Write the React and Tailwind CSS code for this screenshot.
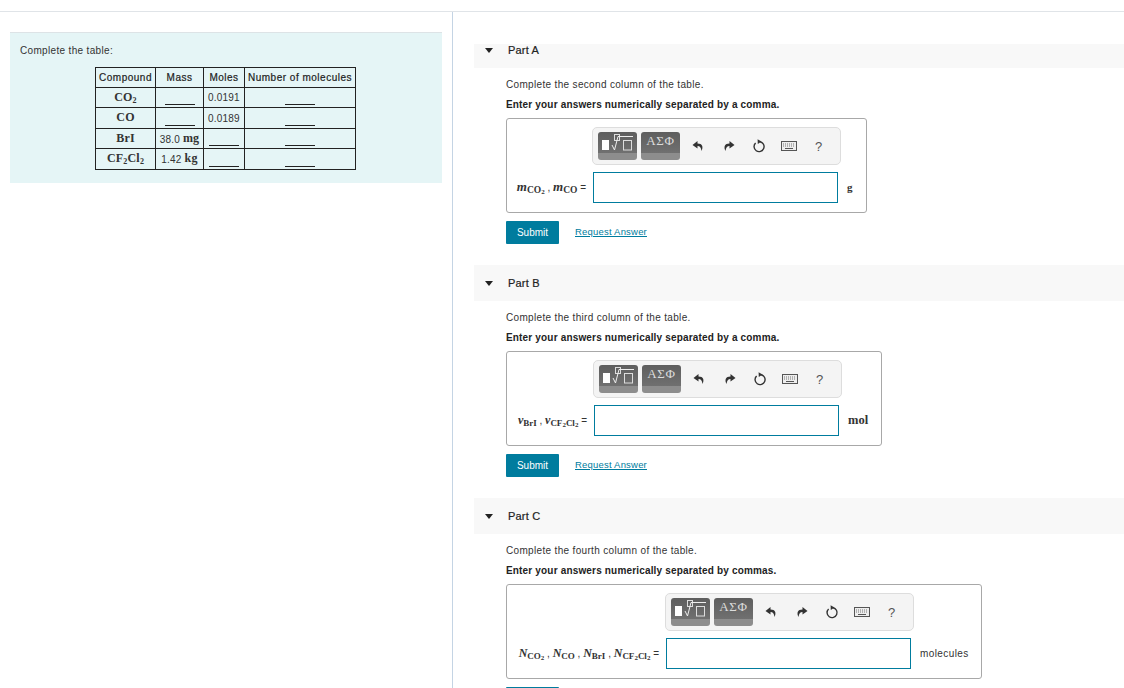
import React from "react";

const Sub = ({ children }) => <span className="relative top-[2px] text-[8px] leading-none">{children}</span>;
const M = ({ children, className = "" }) => (
  <span className={`relative -top-[1px] font-['Liberation_Serif',serif] font-bold text-[12px] text-[#333] ${className}`}>{children}</span>
);
const Blank = () => <span className="inline-block w-[30px] h-[15px] border-b border-[#222] align-top" />;

const Th = ({ children }) => <th className="border border-[#222] p-0 font-normal text-[#222] text-center whitespace-nowrap tracking-[0.5px] [-webkit-text-stroke:0.2px]">{children}</th>;
const Td = ({ children }) => <td className="border border-[#222] p-0 text-center whitespace-nowrap align-middle">{children}</td>;

function DataTable() {
  return (
    <table className="border-collapse table-fixed w-[260px] ml-[85px] mt-[10px] text-[10px] tracking-[0.2px] text-[#333]">
      <colgroup>
        <col className="w-[60px]" />
        <col className="w-[48px]" />
        <col className="w-[41px]" />
        <col className="w-[111px]" />
      </colgroup>
      <tbody>
        <tr className="h-[20px]"><Th>Compound</Th><Th>Mass</Th><Th>Moles</Th><Th>Number of molecules</Th></tr>
        <tr className="h-[20px]"><Td><M>CO<Sub>2</Sub></M></Td><Td><Blank /></Td><Td>0.0191</Td><Td><Blank /></Td></tr>
        <tr className="h-[21px]"><Td><M>CO</M></Td><Td><Blank /></Td><Td>0.0189</Td><Td><Blank /></Td></tr>
        <tr className="h-[20px]"><Td><M>BrI</M></Td><Td>38.0 <M>mg</M></Td><Td><Blank /></Td><Td><Blank /></Td></tr>
        <tr className="h-[21px]"><Td><M>CF<Sub>2</Sub>Cl<Sub>2</Sub></M></Td><Td>1.42 <M>kg</M></Td><Td><Blank /></Td><Td><Blank /></Td></tr>
      </tbody>
    </table>
  );
}

function Toolbar() {
  return (
    <div className="flex items-center w-[249px] h-[38px] bg-[#f4f4f4] border border-[#dddddd] rounded-[5px] pl-[5px]">
      <div className="w-[39px] h-[28px] rounded-[3px] overflow-hidden flex flex-col">
        <div className="h-[21px] bg-gradient-to-b from-[#5e5e5e] to-[#707070]">
          <svg width="39" height="21" viewBox="0 0 39 21" className="block">
            <rect x="4" y="8" width="7" height="10" fill="#fff" />
            <rect x="16.5" y="2.5" width="5" height="6" fill="none" stroke="#ddd" strokeWidth="1" />
            <path d="M14 13 L16.5 18 L20 4.5 H35" fill="none" stroke="#eee" strokeWidth="1" />
            <rect x="25.5" y="8.5" width="8" height="9.5" fill="none" stroke="#ddd" strokeWidth="1" />
          </svg>
        </div>
        <div className="flex-1 bg-[#8d8d8d]" />
      </div>
      <div className="w-[39px] h-[28px] ml-[4px] rounded-[3px] overflow-hidden flex flex-col">
        <div className="h-[21px] bg-gradient-to-b from-[#5e5e5e] to-[#707070] text-center text-[13px] leading-[17px] tracking-[0.6px] text-[#dcdcdc] font-['Liberation_Serif',serif]">ΑΣΦ</div>
        <div className="flex-1 bg-[#8d8d8d]" />
      </div>
      <svg width="12" height="12" viewBox="0 0 12 12" className="ml-[12px]">
        <path d="M5.5 1 L0.5 5 L5.5 8.5 V6 C8 6 9 7.5 9.5 11 C11.5 7 10.5 3.5 5.5 3.5 Z" fill="#333" />
      </svg>
      <svg width="12" height="12" viewBox="0 0 12 12" className="ml-[19px]">
        <path d="M6.5 1 L11.5 5 L6.5 8.5 V6 C4 6 3 7.5 2.5 11 C0.5 7 1.5 3.5 6.5 3.5 Z" fill="#333" />
      </svg>
      <svg width="14" height="14" viewBox="0 0 14 14" className="ml-[17px]">
        <path d="M8 2.7 A5 5 0 1 1 3.6 4" fill="none" stroke="#333" strokeWidth="1.4" />
        <path d="M5.6 0.3 L9.5 2.6 L5.8 5 Z" fill="#333" />
      </svg>
      <svg width="16" height="10" viewBox="0 0 16 10" className="ml-[15px]">
        <rect x="0.5" y="0.5" width="15" height="9" fill="#eee" stroke="#555" />
        <path d="M2 3 H14 M2 5 H14" stroke="#777" strokeWidth="1" strokeDasharray="1 1" />
        <path d="M4 7.5 H12" stroke="#555" strokeWidth="1" />
      </svg>
      <span className="ml-[18px] text-[13px] text-[#555] leading-none">?</span>
    </div>
  );
}

function Part({ title, headerClass, second, bold, boxW, labelW, label, unit }) {
  return (
    <section>
      <div className={`flex items-center bg-[#f8f8f8] pl-[11px] ${headerClass}`}>
        <span className="w-0 h-0 border-x-[4px] border-x-transparent border-t-[5px] border-t-[#222]" />
        <span className="ml-[15px] text-[11px] tracking-[0.2px] text-[#222] [-webkit-text-stroke:0.2px]">{title}</span>
      </div>
      <div className="pl-[32px]">
        <p className="mt-[10px] h-[12px] leading-[14px] text-[10px] tracking-[0.33px] text-[#333]">{second}</p>
        <p className="mt-[8px] h-[12px] leading-[14px] text-[10px] tracking-[0.17px] text-[#222] font-bold">{bold}</p>
        <div className="mt-[8px] h-[95px] border border-[#a8a8a8] rounded-[3px] flex flex-col" style={{ width: boxW }}>
          <div className="mt-[8px] flex" style={{ paddingLeft: labelW - 1 }}>
            <Toolbar />
          </div>
          <div className="mt-[7px] flex items-center">
            <div className="shrink-0 flex justify-end pr-[7px] mb-[2px] text-[10px] text-[#333] whitespace-nowrap" style={{ width: labelW }}>{label}</div>
            <div className="w-[245px] h-[31px] border border-[#007c9e] bg-white shrink-0" />
            <div className="whitespace-nowrap ml-[9px] mb-[3px]">{unit}</div>
          </div>
        </div>
        <div className="mt-[8px] flex items-center">
          <button className="w-[53px] h-[23px] bg-[#007c9e] text-white text-[10px] rounded-[1px]">Submit</button>
          <a className="ml-[16px] text-[9.5px] tracking-[0.2px] text-[#007c9e] underline">Request Answer</a>
        </div>
      </div>
    </section>
  );
}

const I = ({ children }) => <i className="font-['Liberation_Serif',serif] text-[13px] font-bold">{children}</i>;
const I2 = ({ children }) => <i className="font-['Liberation_Serif',serif] text-[12px] font-bold">{children}</i>;
const N = ({ children }) => <span className="font-['Liberation_Serif',serif] text-[9.5px] font-bold relative top-[2px]">{children}</span>;
const N2 = ({ children }) => <span className="font-['Liberation_Serif',serif] text-[9px] font-bold relative top-[2px]">{children}</span>;
const LSub = ({ children }) => <span className="relative top-[1px] text-[7px]">{children}</span>;

export default function App() {
  return (
    <div className="w-[1124px] h-[688px] overflow-hidden bg-white font-['Liberation_Sans',Arial,sans-serif] flex flex-col">
      <div className="h-[12px] shrink-0 border-b border-[#e0e4e8]" />
      <div className="flex flex-1 min-h-0">
        <div className="w-[453px] shrink-0 border-r border-[#c4d4e4] pl-[10px] pr-[10px] pt-[20px]">
          <div className="w-[432px] h-[151px] bg-[#e5f5f6] border-t border-[#dde3e6]">
            <p className="pl-[10px] pt-[12px] h-[24px] leading-[12px] text-[10px] tracking-[0.33px] text-[#333]">Complete the table:</p>
            <DataTable />
          </div>
        </div>
        <div className="flex-1 min-w-0 pl-[21px]">
          <div className="h-[32px]" />
          <div className="flex flex-col gap-[21px]">
            <Part
              title="Part A"
              headerClass="h-[24px] pb-[11px]"
              second="Complete the second column of the table."
              bold="Enter your answers numerically separated by a comma."
              boxW={361}
              labelW={86}
              label={<span><I>m</I><N>CO<LSub>2</LSub></N> , <I>m</I><N>CO</N> =</span>}
              unit={<span className="font-['Liberation_Serif',serif] font-bold text-[11px] text-[#333]">g</span>}
            />
            <Part
              title="Part B"
              headerClass="h-[36px]"
              second="Complete the third column of the table."
              bold="Enter your answers numerically separated by a comma."
              boxW={376}
              labelW={87}
              label={<span><I2>ν</I2><N2>BrI</N2> , <I2>ν</I2><N2>CF<LSub>2</LSub>Cl<LSub>2</LSub></N2> =</span>}
              unit={<span className="font-['Liberation_Serif',serif] font-bold text-[12.5px] text-[#333]">mol</span>}
            />
            <Part
              title="Part C"
              headerClass="h-[36px]"
              second="Complete the fourth column of the table."
              bold="Enter your answers numerically separated by commas."
              boxW={476}
              labelW={159}
              label={<span><I2>N</I2><N2>CO<LSub>2</LSub></N2> , <I2>N</I2><N2>CO</N2> , <I2>N</I2><N2>BrI</N2> , <I2>N</I2><N2>CF<LSub>2</LSub>Cl<LSub>2</LSub></N2> =</span>}
              unit={<span className="text-[10px] tracking-[0.4px] text-[#333]">molecules</span>}
            />
          </div>
        </div>
      </div>
    </div>
  );
}
